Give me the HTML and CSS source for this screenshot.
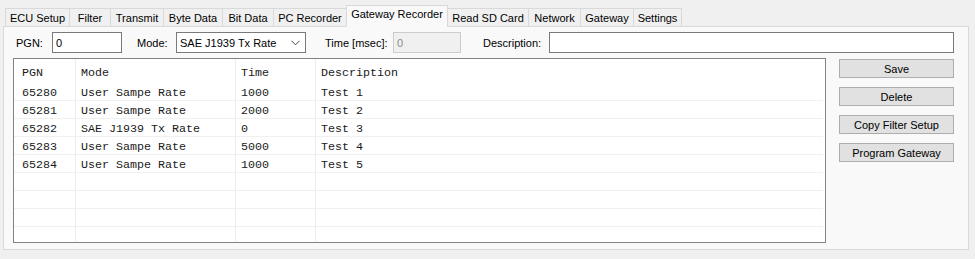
FILE: index.html
```html
<!DOCTYPE html>
<html>
<head>
<meta charset="utf-8">
<link rel="stylesheet" href="styles.css">
</head>
<body>
<div class="window">
  <div class="tabs">
    <div class="tab t1">ECU Setup</div>
    <div class="tab t2">Filter</div>
    <div class="tab t3">Transmit</div>
    <div class="tab t4">Byte Data</div>
    <div class="tab t5">Bit Data</div>
    <div class="tab t6">PC Recorder</div>
    <div class="tab t7 active">Gateway Recorder</div>
    <div class="tab t8">Read SD Card</div>
    <div class="tab t9">Network</div>
    <div class="tab t10">Gateway</div>
    <div class="tab t11">Settings</div>
  </div>
  <div class="panel">
    <div class="toolbar">
      <span class="lbl lbl-pgn">PGN:</span>
      <div class="field f-pgn">0</div>
      <span class="lbl lbl-mode">Mode:</span>
      <div class="select">
        <span>SAE J1939 Tx Rate</span>
        <svg class="chev" width="9" height="6" viewBox="0 0 9 6"><path d="M0.5 0.8 L4.5 4.8 L8.5 0.8" fill="none" stroke="#444" stroke-width="1"/></svg>
      </div>
      <span class="lbl lbl-time">Time [msec]:</span>
      <div class="field f-time">0</div>
      <span class="lbl lbl-desc">Description:</span>
      <div class="field f-desc"></div>
    </div>
    <div class="content">
      <div class="list">
        <div class="row head"><div class="c c1">PGN</div><div class="c c2">Mode</div><div class="c c3">Time</div><div class="c c4">Description</div></div>
        <div class="row"><div class="c c1">65280</div><div class="c c2">User Sampe Rate</div><div class="c c3">1000</div><div class="c c4">Test 1</div></div>
        <div class="row"><div class="c c1">65281</div><div class="c c2">User Sampe Rate</div><div class="c c3">2000</div><div class="c c4">Test 2</div></div>
        <div class="row"><div class="c c1">65282</div><div class="c c2">SAE J1939 Tx Rate</div><div class="c c3">0</div><div class="c c4">Test 3</div></div>
        <div class="row"><div class="c c1">65283</div><div class="c c2">User Sampe Rate</div><div class="c c3">5000</div><div class="c c4">Test 4</div></div>
        <div class="row"><div class="c c1">65284</div><div class="c c2">User Sampe Rate</div><div class="c c3">1000</div><div class="c c4">Test 5</div></div>
        <div class="row"><div class="c c1"></div><div class="c c2"></div><div class="c c3"></div><div class="c c4"></div></div>
        <div class="row"><div class="c c1"></div><div class="c c2"></div><div class="c c3"></div><div class="c c4"></div></div>
        <div class="row"><div class="c c1"></div><div class="c c2"></div><div class="c c3"></div><div class="c c4"></div></div>
        <div class="row"><div class="c c1"></div><div class="c c2"></div><div class="c c3"></div><div class="c c4"></div></div>
      </div>
      <div class="buttons">
        <div class="btn">Save</div>
        <div class="btn">Delete</div>
        <div class="btn">Copy Filter Setup</div>
        <div class="btn">Program Gateway</div>
      </div>
    </div>
  </div>
</div>
</body>
</html>
```
FILE: styles.css
```css
* { box-sizing: border-box; }
html, body { margin: 0; padding: 0; }
body {
  background: #f0f0f0;
  width: 975px;
  height: 259px;
  overflow: hidden;
  font-family: "Liberation Sans", Arial, sans-serif;
  font-size: 11px;
  color: #000;
}
.window {
  padding: 5px 7px 0 3px;
}
.tabs {
  display: flex;
  align-items: flex-end;
  height: 21px;
  padding-left: 2px;
  position: relative;
  z-index: 1;
}
.tab {
  height: 18px;
  border: 1px solid #d9d9d9;
  border-bottom: none;
  border-right: none;
  background: #f0f0f0;
  display: flex;
  align-items: center;
  justify-content: center;
  white-space: nowrap;
}
.tab.t11 { border-right: 1px solid #d9d9d9; }
.tab.active {
  height: 22px;
  margin-bottom: -1px;
  background: #f9f9f9;
  border-right: 1px solid #d9d9d9;
  padding-bottom: 5px;
}
.tab.active + .tab { border-left: none; }
.t1 { width: 64px; }
.t2 { width: 41px; }
.t3 { width: 53px; }
.t4 { width: 59px; }
.t5 { width: 51px; }
.t6 { width: 73px; }
.t7 { width: 102px; }
.t8 { width: 80px; }
.t9 { width: 52px; }
.t10 { width: 53px; }
.t11 { width: 49px; }

.panel {
  width: 966px;
  height: 224px;
  border: 1px solid #d9d9d9;
  background: #f9f9f9;
  padding: 5px 14px 0 9px;
}
.toolbar {
  display: flex;
  align-items: center;
  height: 21px;
}
.lbl { white-space: nowrap; }
.lbl-pgn { margin-left: 3px; width: 36px; }
.lbl-mode { margin-left: 15px; width: 39px; }
.lbl-time { margin-left: 19px; width: 68px; }
.lbl-desc { margin-left: 22px; width: 66px; }
.field {
  height: 21px;
  border: 1px solid #7a7a7a;
  background: #fff;
  padding: 0 3px;
  display: flex;
  align-items: center;
}
.f-pgn { width: 70px; }
.f-time {
  width: 68px;
  background: #f0f0f0;
  border-color: #cccccc;
  color: #8a8a8a;
}
.f-desc { flex: 1; }
.select {
  width: 130px;
  height: 21px;
  border: 1px solid #7a7a7a;
  background: #fff;
  display: flex;
  align-items: center;
  justify-content: space-between;
  padding: 0 5px 0 3px;
}
.chev { display: block; }

.content {
  display: flex;
  gap: 13px;
  margin-top: 5px;
}
.list {
  flex: 1;
  height: 185px;
  border: 1px solid #828282;
  background: #fff;
  overflow: hidden;
  padding-right: 2px;
  font-family: "Liberation Mono", "Courier New", monospace;
  font-size: 11.67px;
  color: #1a1a1a;
}
.row {
  display: flex;
  height: 18px;
  border-bottom: 1px solid #f0f0f0;
}
.row.head {
  height: 24px;
  border-bottom: none;
}
.c {
  height: 100%;
  border-right: 1px solid #ededed;
  display: flex;
  align-items: center;
  padding-left: 5px;
  padding-top: 3px;
  white-space: nowrap;
}
.head .c { padding-top: 3px; }
.c1 { width: 62px; padding-left: 8px; }
.c2 { width: 160px; }
.c3 { width: 80px; }
.c4 { flex: 1; border-right: none; }

.buttons {
  width: 115px;
  display: flex;
  flex-direction: column;
  gap: 9px;
  padding-top: 1px;
}
.btn {
  height: 19px;
  border: 1px solid #adadad;
  background: #e1e1e1;
  display: flex;
  align-items: center;
  justify-content: center;
  white-space: nowrap;
}
```
